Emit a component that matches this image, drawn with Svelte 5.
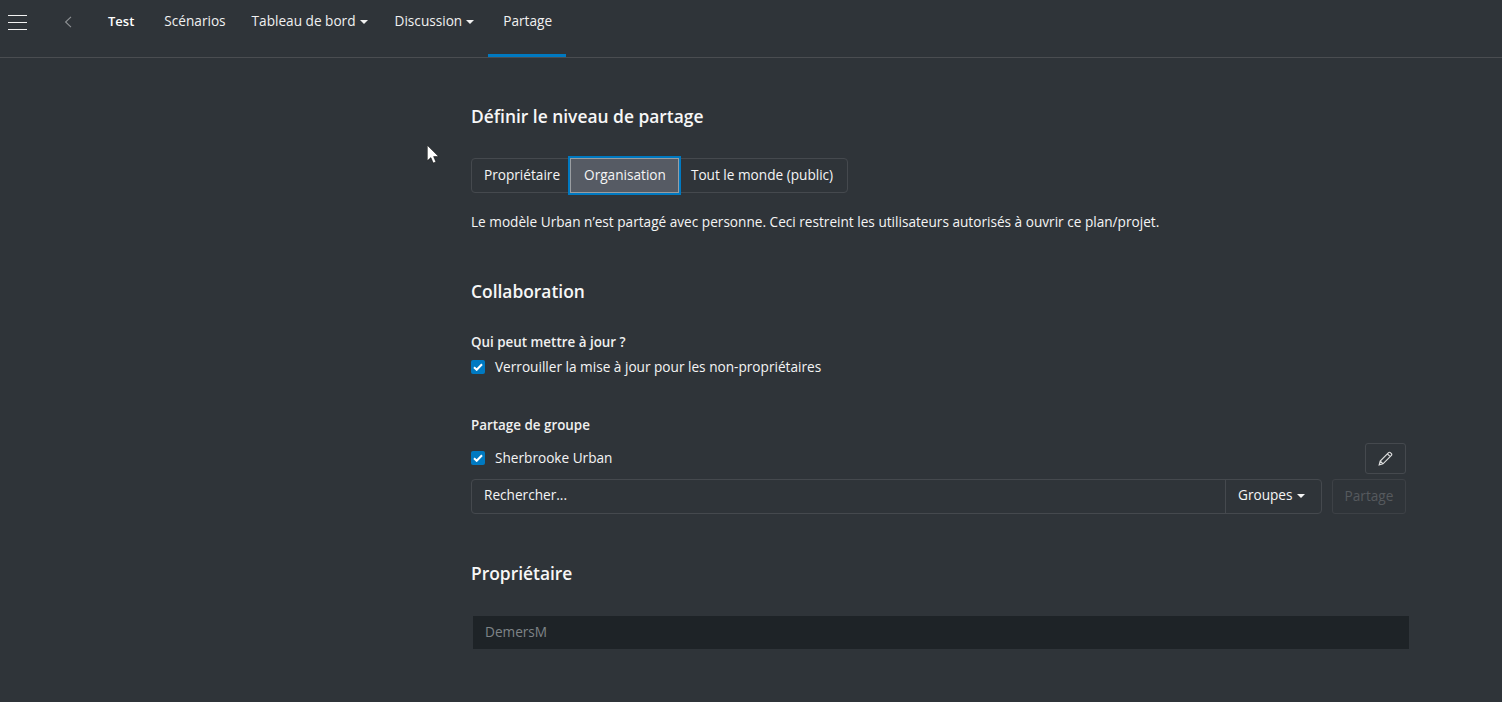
<script>
  const navItems = [
    { label: 'Test', bold: true },
    { label: 'Scénarios' },
    { label: 'Tableau de bord', caret: true },
    { label: 'Discussion', caret: true },
    { label: 'Partage', active: true }
  ];
  const levels = ['Propriétaire', 'Organisation', 'Tout le monde (public)'];
</script>

<div class="page">
  <header class="topbar">
    <button class="burger" aria-label="Menu"><span></span><span></span><span></span></button>
    <button class="back" aria-label="Retour">
      <svg width="10" height="12" viewBox="0 0 10 12"><path d="M8 .8 2.6 6 8 11.2" fill="none" stroke="#8f9295" stroke-width="1.1" /></svg>
    </button>
    <nav class="tabs">
      {#each navItems as item}
        <a class="tab" class:bold={item.bold} class:active={item.active} class:drop={item.caret} href="#top">
          {item.label}{#if item.caret}<i class="caret"></i>{/if}
        </a>
      {/each}
    </nav>
  </header>

  <main class="content">
    <h2 class="first">Définir le niveau de partage</h2>
    <div class="segments">
      {#each levels as level, i}
        <button class="segment" class:on={i === 1}>{level}</button>
      {/each}
    </div>
    <p class="note">Le modèle Urban n’est partagé avec personne. Ceci restreint les utilisateurs autorisés à ouvrir ce plan/projet.</p>

    <h2 class="collab">Collaboration</h2>
    <h3>Qui peut mettre à jour ?</h3>
    <label class="check">
      <span class="box"><svg width="10" height="8" viewBox="0 0 10 8"><path d="M1 4.2 3.7 6.8 9 1.2" fill="none" stroke="#fff" stroke-width="2" /></svg></span>
      Verrouiller la mise à jour pour les non-propriétaires
    </label>

    <h3 class="group-title">Partage de groupe</h3>
    <div class="group-row">
      <label class="check">
        <span class="box"><svg width="10" height="8" viewBox="0 0 10 8"><path d="M1 4.2 3.7 6.8 9 1.2" fill="none" stroke="#fff" stroke-width="2" /></svg></span>
        Sherbrooke Urban
      </label>
      <button class="edit" aria-label="Modifier">
        <svg width="15" height="15" viewBox="0 0 15 15"><path d="M1.2 13.8 2.2 10 10.6 1.6a1.2 1.2 0 0 1 1.7 0l1.1 1.1a1.2 1.2 0 0 1 0 1.7L5 12.8 1.2 13.8ZM2.2 10 5 12.8M9.4 2.8l2.8 2.8" fill="none" stroke="#dcdddd" stroke-width="1.2" /></svg>
      </button>
    </div>
    <div class="search-row">
      <div class="search">
        <span class="query">Rechercher...</span>
        <span class="scope">Groupes<i class="caret"></i></span>
      </div>
      <button class="share" disabled>Partage</button>
    </div>

    <h2 class="owner-title">Propriétaire</h2>
    <div class="owner">DemersM</div>
  </main>

  <svg class="cursor" width="13" height="19" viewBox="0 0 13 19"><path d="M.3.3V15.8L3.9 12.6 6.2 18 8.9 16.9 6.6 11.6H11.6Z" fill="#fff" stroke="#000" stroke-width=".5" /></svg>
</div>

<style>
  :global(body) {
    margin: 0;
    background: #2f3439;
  }
  .page {
    position: relative;
    height: 702px;
    overflow: hidden;
    background: #2f3439;
    color: #f5f5f5;
    font-family: "Open Sans", sans-serif;
    font-size: 13.63px;
  }
  button {
    font: inherit;
    color: inherit;
    background: none;
    border: 0;
    padding: 0;
  }
  .topbar {
    display: flex;
    align-items: stretch;
    height: 57px;
    border-bottom: 1px solid #4a4d51;
  }
  .burger {
    display: flex;
    flex-direction: column;
    gap: 6px;
    width: 19px;
    margin: 15px 0 0 8px;
  }
  .burger span {
    display: block;
    height: 1px;
    background: #f2f2f2;
  }
  .back {
    display: flex;
    width: 10px;
    height: 12px;
    margin: 16px 0 0 36px;
  }
  .tabs {
    display: flex;
    margin-left: 20px;
  }
  .tab {
    padding: 11px 15px 0;
    color: #f1f1f1;
    text-decoration: none;
    height: 46px;
    white-space: nowrap;
  }
  .tab.bold {
    font-size: 13px;
    font-weight: 600;
    color: #fff;
    padding-top: 12px;
    height: 45px;
  }
  .tab.drop {
    padding-left: 11px;
  }
  .tab.drop + .tab.drop {
    padding: 11px 14px 0 12px;
  }
  .tab.active {
    padding-right: 14px;
    border-bottom: 3px solid #0079c1;
    height: 43px;
  }
  .caret {
    display: inline-block;
    width: 0;
    height: 0;
    margin-left: 4px;
    vertical-align: 2px;
    border-top: 4px solid currentColor;
    border-left: 4px solid transparent;
    border-right: 4px solid transparent;
  }
  .content {
    width: 935px;
    margin-left: 471px;
  }
  h2 {
    margin: 0;
    font-size: 17.4px;
    font-weight: 600;
    line-height: 24px;
    color: #f7f7f7;
  }
  h3 {
    margin: 0;
    font-size: 13.4px;
    font-weight: 600;
    line-height: 18px;
    color: #f0f0f0;
  }
  .first {
    margin-top: 46px;
  }
  .segments {
    display: inline-flex;
    margin-top: 30px;
    height: 35px;
    box-sizing: border-box;
    border: 1px solid #45494e;
    border-radius: 4px;
    vertical-align: top;
  }
  .segment {
    padding: 0 10px 2px 12px;
    white-space: nowrap;
  }
  .segment.on {
    margin: -1px 0;
    padding: 0 12px 2px 13px;
    background: #565b64;
    border: 1px solid #9a9da1;
    outline: 2px solid #0079c1;
  }
  .segment.on + .segment {
    padding: 0 14px 2px 12px;
  }
  .note {
    margin: 19px 0 0;
    line-height: 20px;
  }
  .collab {
    margin-top: 47px;
  }
  .collab + h3 {
    margin-top: 30px;
  }
  .check {
    display: flex;
    align-items: center;
    gap: 10px;
    line-height: 20px;
  }
  h3 + .check {
    margin-top: 6px;
  }
  .box {
    display: flex;
    align-items: center;
    justify-content: center;
    width: 14px;
    height: 14px;
    border-radius: 2px;
    background: #0079c1;
  }
  .group-title {
    margin-top: 39px;
  }
  .group-row {
    display: flex;
    align-items: center;
    justify-content: space-between;
    margin-top: 9px;
  }
  .group-row .check {
    padding-bottom: 1px;
  }
  .edit {
    display: flex;
    align-items: center;
    justify-content: center;
    width: 41px;
    height: 31px;
    box-sizing: border-box;
    border: 1px solid #45494e;
    border-radius: 3px;
  }
  .search-row {
    display: flex;
    gap: 10px;
    margin-top: 5px;
  }
  .search {
    flex: 1;
    display: flex;
    height: 35px;
    box-sizing: border-box;
    border: 1px solid #45494e;
    border-radius: 4px;
    line-height: 30px;
  }
  .query {
    flex: 1;
    padding-left: 12px;
  }
  .scope {
    width: 96px;
    box-sizing: border-box;
    padding-left: 12px;
    border-left: 1px solid #45494e;
  }
  .share {
    width: 74px;
    height: 35px;
    box-sizing: border-box;
    padding-bottom: 2px;
    border: 1px solid #3d4146;
    border-radius: 3px;
    color: #565a5e;
  }
  .owner-title {
    margin-top: 47px;
  }
  .owner {
    box-sizing: border-box;
    width: 936px;
    height: 33px;
    margin: 31px 0 0 2px;
    padding-left: 12px;
    background: #1e2327;
    color: #7f8387;
    line-height: 32px;
  }
  .cursor {
    position: absolute;
    left: 427px;
    top: 145px;
  }
</style>
